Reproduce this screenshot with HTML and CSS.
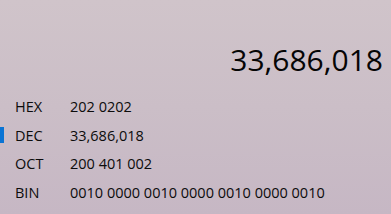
FILE: index.html
```html
<!DOCTYPE html>
<html>
<head>
<meta charset="utf-8">
<link rel="stylesheet" href="styles.css">
</head>
<body>
<div class="calc">
  <div class="display">33,686,018</div>
  <ul class="radix">
    <li class="row"><span class="label">HEX</span><span class="value">202 0202</span></li>
    <li class="row active"><span class="label">DEC</span><span class="value">33,686,018</span></li>
    <li class="row"><span class="label">OCT</span><span class="value">200 401 002</span></li>
    <li class="row"><span class="label">BIN</span><span class="value">0010 0000 0010 0000 0010 0000 0010</span></li>
  </ul>
</div>
</body>
</html>
```
FILE: styles.css
```css
html, body {
  margin: 0;
  padding: 0;
}
body {
  width: 391px;
  height: 214px;
  overflow: hidden;
  background: linear-gradient(180deg, #d0c4ca 0%, #cbbec7 50%, #c6b7c4 100%);
  font-family: "Open Sans", "Noto Sans", sans-serif;
  color: #0c0c0c;
}
.calc {
  display: flex;
  flex-direction: column;
}
.display {
  height: 80px;
  display: flex;
  align-items: flex-end;
  justify-content: flex-end;
  padding-right: 8px;
  font-size: 30px;
  font-weight: 500;
  line-height: 40px;
  color: #050505;
}
.radix {
  list-style: none;
  margin: 0;
  padding: 12px 0 0 0;
  display: flex;
  flex-direction: column;
}
.row {
  position: relative;
  display: flex;
  align-items: center;
  height: 28.7px;
  font-size: 14.5px;
  font-weight: 500;
  padding-left: 15px;
}
.row.active::before {
  content: "";
  position: absolute;
  left: 0;
  top: 6px;
  width: 4px;
  height: 16px;
  background: #0a74d4;
}
.label {
  width: 55px;
}
.value {
  white-space: nowrap;
}
```
